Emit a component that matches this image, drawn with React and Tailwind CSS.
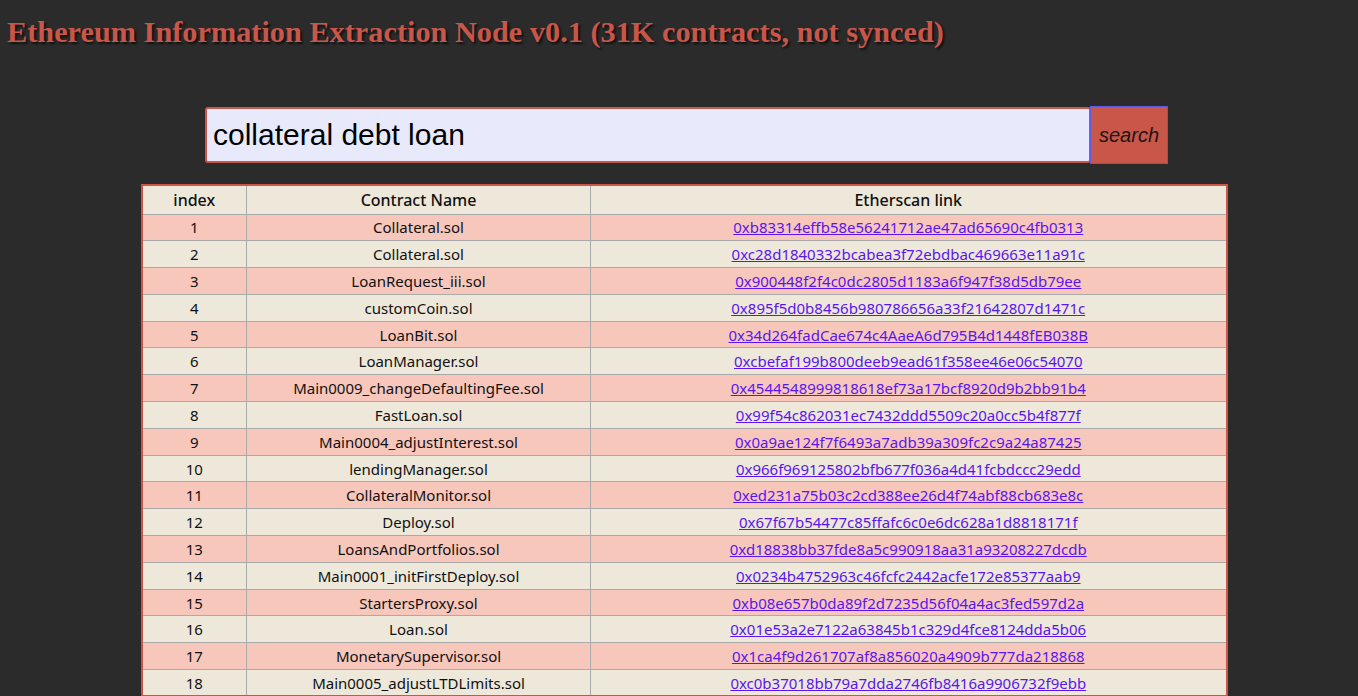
import React from 'react';

const rows = [
  ['Collateral.sol', '0xb83314effb58e56241712ae47ad65690c4fb0313'],
  ['Collateral.sol', '0xc28d1840332bcabea3f72ebdbac469663e11a91c'],
  ['LoanRequest_iii.sol', '0x900448f2f4c0dc2805d1183a6f947f38d5db79ee'],
  ['customCoin.sol', '0x895f5d0b8456b980786656a33f21642807d1471c'],
  ['LoanBit.sol', '0x34d264fadCae674c4AaeA6d795B4d1448fEB038B'],
  ['LoanManager.sol', '0xcbefaf199b800deeb9ead61f358ee46e06c54070'],
  ['Main0009_changeDefaultingFee.sol', '0x4544548999818618ef73a17bcf8920d9b2bb91b4'],
  ['FastLoan.sol', '0x99f54c862031ec7432ddd5509c20a0cc5b4f877f'],
  ['Main0004_adjustInterest.sol', '0x0a9ae124f7f6493a7adb39a309fc2c9a24a87425'],
  ['lendingManager.sol', '0x966f969125802bfb677f036a4d41fcbdccc29edd'],
  ['CollateralMonitor.sol', '0xed231a75b03c2cd388ee26d4f74abf88cb683e8c'],
  ['Deploy.sol', '0x67f67b54477c85ffafc6c0e6dc628a1d8818171f'],
  ['LoansAndPortfolios.sol', '0xd18838bb37fde8a5c990918aa31a93208227dcdb'],
  ['Main0001_initFirstDeploy.sol', '0x0234b4752963c46fcfc2442acfe172e85377aab9'],
  ['StartersProxy.sol', '0xb08e657b0da89f2d7235d56f04a4ac3fed597d2a'],
  ['Loan.sol', '0x01e53a2e7122a63845b1c329d4fce8124dda5b06'],
  ['MonetarySupervisor.sol', '0x1ca4f9d261707af8a856020a4909b777da218868'],
  ['Main0005_adjustLTDLimits.sol', '0xc0b37018bb79a7dda2746fb8416a9906732f9ebb'],
];

export default function App() {
  return (
    <div className="min-h-screen bg-[#2b2b2b] pb-10">
      {/* Title */}
      <h1 className="pl-[7px] pt-[12px] text-[30.3px] leading-[40px] font-bold text-[#c8574a] font-['Liberation_Serif',serif] [text-shadow:2px_2px_2px_#111]">
        Ethereum Information Extraction Node v0.1 (31K contracts, not synced)
      </h1>

      {/* Search */}
      <div className="mt-[55px] flex justify-center">
        <div className="flex ml-[15px]">
          <input
            type="text"
            defaultValue="collateral debt loan"
            className="w-[886px] h-[56px] bg-[#e8eafc] border-2 border-[#c8574a] rounded-[3px] px-[6px] text-[30px] text-black outline-none font-['Liberation_Sans',sans-serif]"
          />
          <button className="w-[78px] h-[58px] -mt-px -ml-px bg-[#c8574a] border border-[#5a5ae0] italic text-[20px] text-[#221414] font-['Liberation_Sans',sans-serif]">
            search
          </button>
        </div>
      </div>

      {/* Results table */}
      <div className="mt-[20px] flex justify-center">
        <table className="ml-[10px] w-[1087px] border-2 border-[#c8574a] border-collapse text-[15px] text-[#111] font-['Noto_Sans',sans-serif]">
          <thead className="bg-[#ede8da] text-[16px]">
            <tr className="h-[29px]">
              <th className="w-[105px] border border-[#aaa] font-medium">index</th>
              <th className="w-[344px] border border-[#aaa] font-medium">Contract Name</th>
              <th className="border border-[#aaa] font-medium">Etherscan link</th>
            </tr>
          </thead>
          <tbody>
            {rows.map(([name, addr], idx) => (
              <tr key={idx} className={`h-[26.8px] ${idx % 2 === 0 ? 'bg-[#f8c7bc]' : 'bg-[#ede8da]'}`}>
                <td className="border border-[#aaa] text-center leading-[20px] p-0">{idx + 1}</td>
                <td className="border border-[#aaa] text-center leading-[20px] p-0">{name}</td>
                <td className="border border-[#aaa] text-center leading-[20px] p-0">
                  <a href="#" className="text-[#5a16ee] underline">{addr}</a>
                </td>
              </tr>
            ))}
          </tbody>
        </table>
      </div>
    </div>
  );
}
